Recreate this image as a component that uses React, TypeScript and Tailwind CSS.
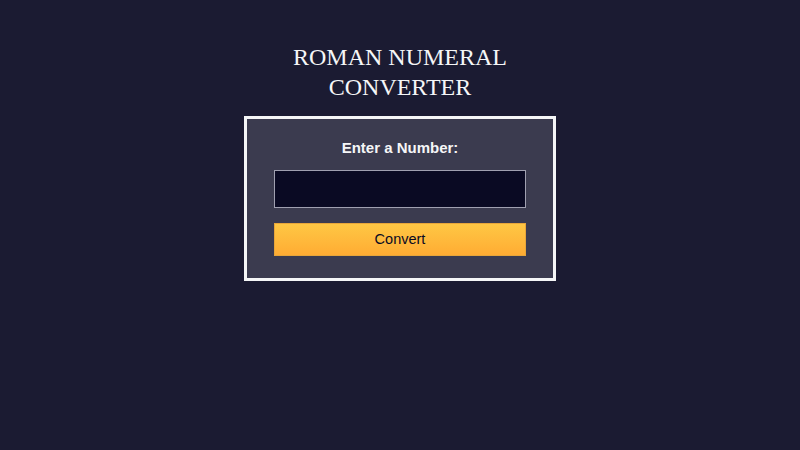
import React, { useState } from 'react';

const App = () => {
  const [value, setValue] = useState('');

  return (
    <div className="min-h-screen w-full bg-[#1b1b32] flex flex-col items-center pt-[42px] font-['Liberation_Sans',Arial,sans-serif]">
      <h1 className="text-center text-[24px] leading-[30px] text-[#f5f6f7] font-['Liberation_Serif','Times_New_Roman',serif]">
        ROMAN NUMERAL
        <br />
        CONVERTER
      </h1>
      <form
        className="mt-[14px] w-[312px] border-[3px] border-[#f5f6f7] bg-[#3b3b4f] px-[27px] pt-[17px] pb-[22px] flex flex-col items-center"
        onSubmit={(e) => e.preventDefault()}
      >
        <label htmlFor="number" className="text-[15px] leading-[24px] font-bold text-[#f5f6f7]">
          Enter a Number:
        </label>
        <input
          id="number"
          type="number"
          value={value}
          onChange={(e) => setValue(e.target.value)}
          className="mt-[10px] h-[38px] w-full bg-[#0a0a23] border border-[#a0a0b0] text-white px-2 outline-none"
        />
        <button
          type="submit"
          className="mt-[15px] h-[33px] w-full border border-[#e8a63a] bg-gradient-to-b from-[#fec744] to-[#ffac33] text-[14.5px] text-[#0a0a23]"
        >
          Convert
        </button>
      </form>
    </div>
  );
};

export default App;
